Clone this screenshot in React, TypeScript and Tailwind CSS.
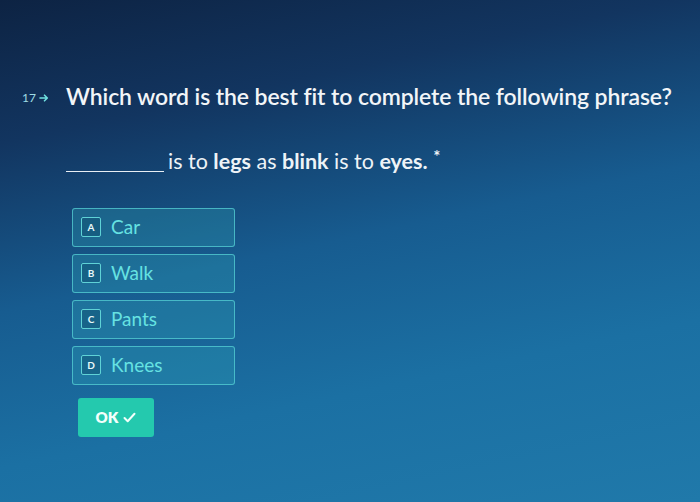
import React from "react";

const options = [
  { k: "A", label: "Car" },
  { k: "B", label: "Walk" },
  { k: "C", label: "Pants" },
  { k: "D", label: "Knees" },
];

export default function App() {
  return (
    <div
      className="w-[700px] h-[502px] overflow-hidden bg-[linear-gradient(168deg,#0d2343_0%,#123560_22%,#175c90_48%,#1b70a3_72%,#2079aa_100%)] text-white"
      style={{ fontFamily: "Lato, 'Open Sans', sans-serif" }}
    >
      <div className="pt-[85px] pl-[22px]">
        <div className="flex items-center">
          <div className="w-[44px] flex items-center gap-[2px] text-[12px] text-[#9fdce4] pt-[2px]">
            <span>17</span>
            <svg width="10" height="10" viewBox="0 0 10 10" className="ml-[1px]">
              <path d="M1 5h7M5.5 2.2 8.3 5 5.5 7.8" stroke="#6fe0e0" strokeWidth="1.6" fill="none" strokeLinecap="round" strokeLinejoin="round" />
            </svg>
          </div>
          <h1 className="text-[23px] font-semibold tracking-[-0.1px] text-[#f2f5f8] leading-none">
            Which word is the best fit to complete the following phrase?
          </h1>
        </div>
        <div className="pl-[44px] mt-[43px] flex items-end text-[21.5px] text-[#eef3f7] leading-none">
          <span className="inline-block w-[98px] border-b-[1.5px] border-[#e8eef4] mb-[1px] mr-[4px]"></span>
          <span>
            is to <b className="font-bold">legs</b> as <b className="font-bold">blink</b> is to{" "}
            <b className="font-bold">eyes.</b> <span className="relative -top-[6px] text-[17px] font-semibold">*</span>
          </span>
        </div>
        <div className="pl-[50px] mt-[35px] flex flex-col gap-[7px]">
          {options.map((o) => (
            <div
              key={o.k}
              className="w-[163px] h-[39px] rounded-[3px] border border-[#55d0d4]/75 bg-[#34b4c0]/25 flex items-center pl-[8px] gap-[10px]"
            >
              <div className="w-[20px] h-[20px] rounded-[2px] border border-[#5fd2d6] bg-[#0f5474]/50 flex items-center justify-center text-[10px] font-bold text-[#e8f8f8]">
                {o.k}
              </div>
              <span className="text-[19px] text-[#66e2e2]">{o.label}</span>
            </div>
          ))}
          <div className="mt-[6px] ml-[6px] w-[76px] h-[39px] rounded-[3px] bg-[#24c9ae] flex items-center justify-center gap-[5px]">
            <span className="text-[15px] font-extrabold text-[#f2fffb]">OK</span>
            <svg width="13" height="11" viewBox="0 0 13 11">
              <path d="M1.5 6l3.2 3.2L11.5 1.8" stroke="#f2fffb" strokeWidth="2" fill="none" strokeLinecap="round" strokeLinejoin="round" />
            </svg>
          </div>
        </div>
      </div>
    </div>
  );
}
